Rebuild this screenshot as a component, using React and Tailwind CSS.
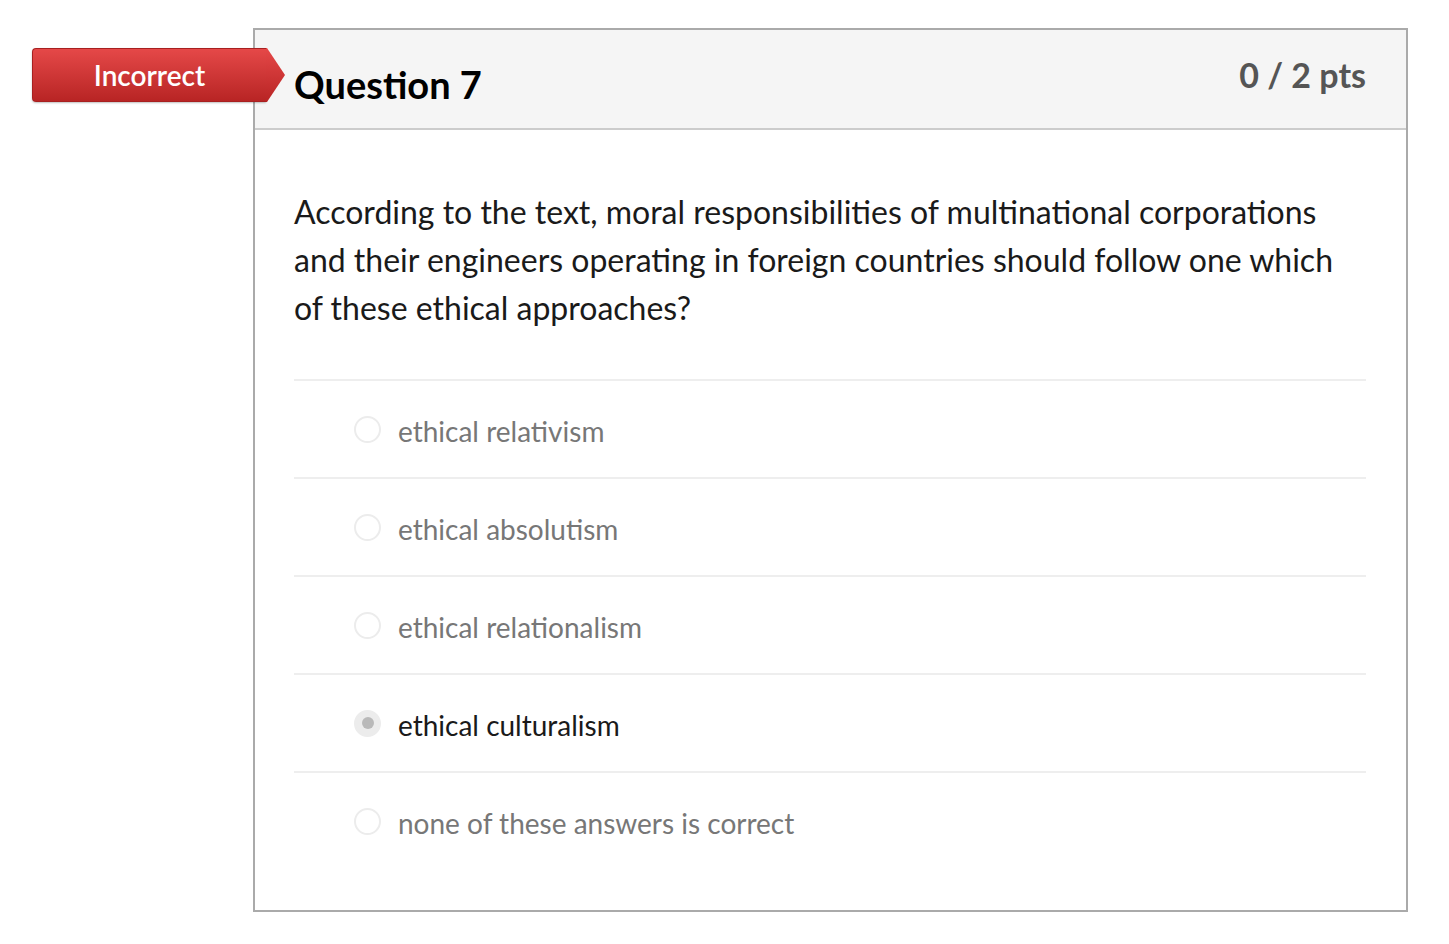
import React from 'react';

const answers = [
  { text: 'ethical relativism', selected: false },
  { text: 'ethical absolutism', selected: false },
  { text: 'ethical relationalism', selected: false },
  { text: 'ethical culturalism', selected: true },
  { text: 'none of these answers is correct', selected: false },
];

function Radio({ selected }) {
  return (
    <span
      className={
        'flex h-[27px] w-[27px] shrink-0 items-center justify-center rounded-full border-2 border-[#ececec] ' +
        (selected ? 'bg-[#ececec]' : 'bg-white')
      }
    >
      {selected && <span className="h-[12px] w-[12px] rounded-full bg-[#b9b9b9]" />}
    </span>
  );
}

export default function App() {
  return (
    <div className="min-h-screen bg-white font-['Lato','Open_Sans',sans-serif] text-black">
      <div className="relative pl-[253px] pr-[41px] pt-[28px]">
        {/* status badge */}
        <div className="absolute left-[32px] top-[48px] flex h-[54px] items-stretch">
          <div className="flex w-[234px] items-center justify-center rounded-l-[4px] border border-r-0 border-[#a82020] bg-gradient-to-b from-[#e54848] to-[#b82424] text-[28px] font-semibold text-white shadow-[0_1px_2px_rgba(0,0,0,0.25)]">
            Incorrect
          </div>
          <svg width="19" height="54" viewBox="0 0 19 54" className="block">
            <defs>
              <linearGradient id="badgeArrow" x1="0" y1="0" x2="0" y2="1">
                <stop offset="0" stopColor="#e54848" />
                <stop offset="1" stopColor="#b82424" />
              </linearGradient>
            </defs>
            <polygon points="0,0 1,0 19,27 1,54 0,54" fill="url(#badgeArrow)" />
          </svg>
        </div>

        <div className="border-2 border-[#aaaaaa]">
          {/* header */}
          <div className="flex h-[100px] justify-between border-b-2 border-[#cccccc] bg-[#f5f5f5] pl-[39px] pr-[40px]">
            <h2 className="pt-[30px] text-[38px] font-bold leading-[48px]">Question 7</h2>
            <div className="pt-[25px] text-[34px] font-bold leading-[40px] text-[#555555]">0 / 2 pts</div>
          </div>

          {/* body */}
          <div className="pb-[41px] pl-[39px] pr-[40px] pt-[58px]">
            <p className="text-[32px] leading-[48px] text-[#1a1a1a]">
              According to the text, moral responsibilities of multinational corporations and their engineers
              operating in foreign countries should follow one which of these ethical approaches?
            </p>

            <div className="mt-[47px]">
              {answers.map((a) => (
                <div
                  key={a.text}
                  className="flex h-[98px] items-center gap-[17px] border-t-2 border-[#eeeeee] pl-[60px]"
                >
                  <Radio selected={a.selected} />
                  <span
                    className={
                      'pt-[4px] text-[28px] ' + (a.selected ? 'text-[#1a1a1a]' : 'text-[#777777]')
                    }
                  >
                    {a.text}
                  </span>
                </div>
              ))}
            </div>
          </div>
        </div>
      </div>
    </div>
  );
}
